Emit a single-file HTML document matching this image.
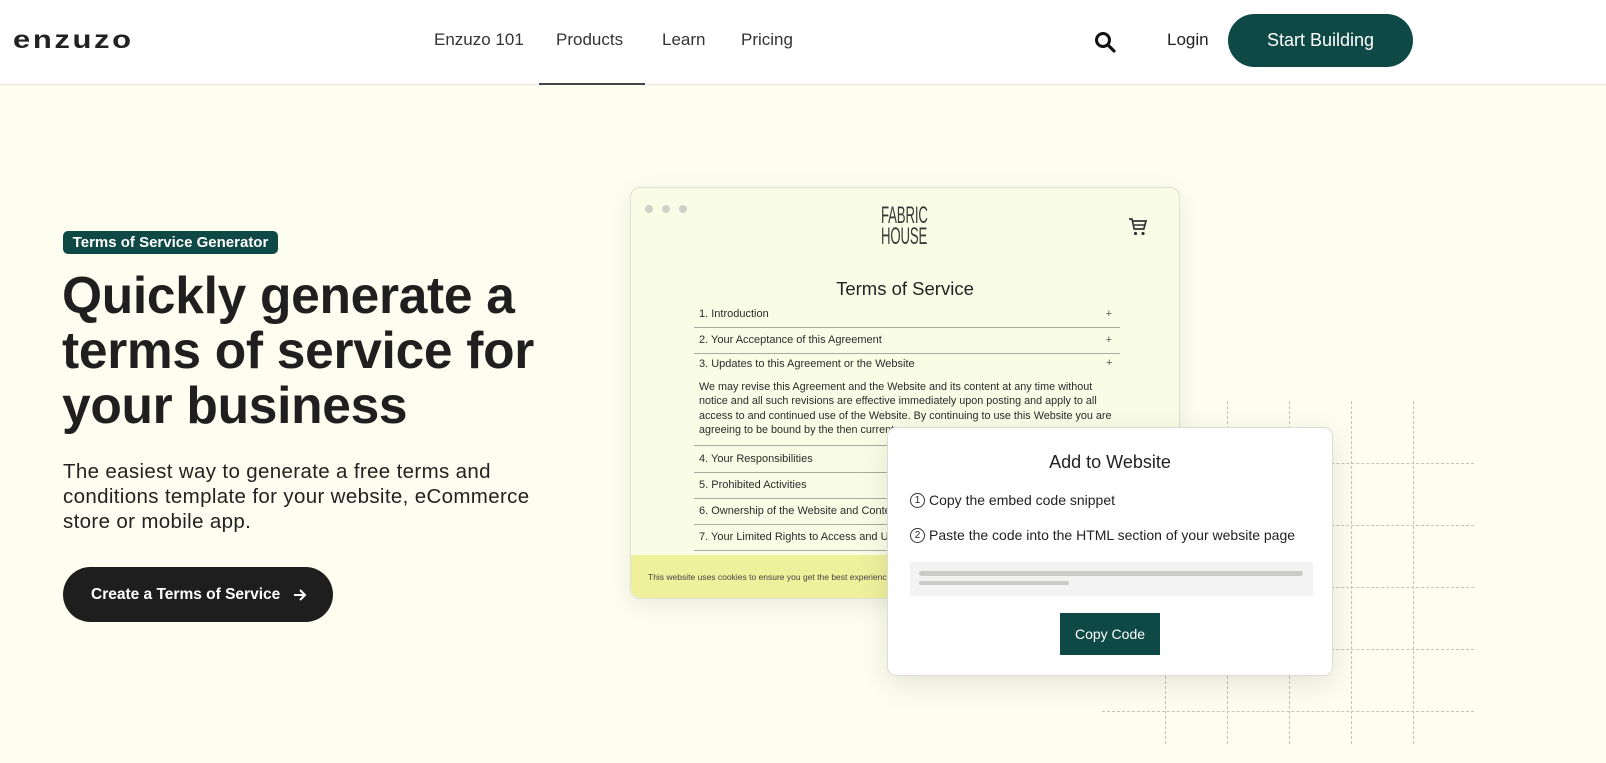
<!DOCTYPE html>
<html><head><meta charset="utf-8"><style>
*{margin:0;padding:0;box-sizing:border-box}
body{width:1606px;height:763px;overflow:hidden;background:#fdfeef;font-family:"Liberation Sans",sans-serif;color:#1f1f1f;position:relative}
.abs{position:absolute}
header{position:absolute;left:0;top:0;width:1606px;height:85px;background:#fff;border-bottom:1px solid #e6e6df}
.nav{position:absolute;top:30px;font-size:17px;color:#333}
.row{position:absolute;left:694px;width:426px;font-size:11px;color:#2a2a2a;border-bottom:1px solid #a9aaa0;height:26px;line-height:24px;padding-left:5px}
.row span{position:absolute;right:8px;top:0;color:#555}
.v{position:absolute;width:0;border-left:1px dashed #c4c4bb;top:401px;height:343px}
.h{position:absolute;height:0;border-top:1px dashed #c4c4bb;left:1102px;width:372px}
</style></head><body>
<header>
<div class="abs" style="left:13px;top:22px;font-size:31px;letter-spacing:2.6px;color:#222;font-weight:bold;transform:scaleY(.8)">enzuzo</div>
<div class="nav" style="left:434px">Enzuzo 101</div>
<div class="nav" style="left:556px">Products</div>
<div class="nav" style="left:662px">Learn</div>
<div class="nav" style="left:741px">Pricing</div>
<div class="abs" style="left:539px;top:83px;width:106px;height:2px;background:#444"></div>
<svg class="abs" style="left:1094px;top:31px" width="23" height="23" viewBox="0 0 23 23"><circle cx="9" cy="9" r="6.5" fill="none" stroke="#111" stroke-width="3"/><path d="M14 14l6 6" stroke="#111" stroke-width="3.2" stroke-linecap="round"/></svg>
<div class="nav" style="left:1167px;color:#222">Login</div>
<div class="abs" style="left:1228px;top:14px;width:185px;height:53px;border-radius:27px;background:#0f4946;color:#fff;font-size:18px;text-align:center;line-height:53px">Start Building</div>
</header>

<div class="abs" style="left:63px;top:231px;width:215px;height:23px;border-radius:5px;background:#0f4946;color:#fff;font-weight:bold;font-size:15px;line-height:23px;text-align:center">Terms of Service Generator</div>
<div class="abs" style="left:62px;top:268px;font-size:51.5px;font-weight:bold;line-height:55px;letter-spacing:-0.3px;color:#1f1f1f">Quickly generate a<br>terms of service for<br>your business</div>
<div class="abs" style="left:63px;top:459px;font-size:20.5px;line-height:25px;letter-spacing:0.35px;color:#222">The easiest way to generate a free terms and<br>conditions template for your website, eCommerce<br>store or mobile app.</div>
<div class="abs" style="left:63px;top:567px;width:270px;height:55px;border-radius:28px;background:#1e1e1e;color:#fff;font-weight:bold;font-size:15.5px;line-height:55px;padding-left:28px">Create a Terms of Service
<svg style="position:absolute;left:230px;top:21px" width="14" height="14" viewBox="0 0 14 14"><path d="M1 7h11M7 2l5 5-5 5" fill="none" stroke="#fff" stroke-width="2"/></svg></div>

<div class="v" style="left:1165px"></div><div class="v" style="left:1227px"></div><div class="v" style="left:1289px"></div><div class="v" style="left:1351px"></div><div class="v" style="left:1413px"></div>
<div class="h" style="top:463px"></div><div class="h" style="top:525px"></div><div class="h" style="top:587px"></div><div class="h" style="top:649px"></div><div class="h" style="top:711px"></div>

<div class="abs" style="left:630px;top:187px;width:550px;height:412px;border-radius:10px;background:#fafde6;border:1px solid #dfe0d4;box-shadow:0 6px 24px rgba(0,0,0,.08);overflow:hidden">
<div class="abs" style="left:14px;top:17px;width:8px;height:8px;border-radius:50%;background:#cfd0c8"></div>
<div class="abs" style="left:31px;top:17px;width:8px;height:8px;border-radius:50%;background:#cfd0c8"></div>
<div class="abs" style="left:48px;top:17px;width:8px;height:8px;border-radius:50%;background:#cfd0c8"></div>
<div class="abs" style="left:232px;top:17px;width:80px;text-align:center;font-size:24px;line-height:21px;color:#3a3a3a;transform:scaleX(.55);letter-spacing:-0.3px">FABRIC<br>HOUSE</div>
<svg class="abs" style="left:497px;top:29px" width="20" height="20" viewBox="0 0 20 20"><path d="M1 2h3l2.2 10h9.6l2.2-8H5" fill="none" stroke="#333" stroke-width="1.7"/><path d="M6 8h11" stroke="#333" stroke-width="1.5"/><circle cx="7.5" cy="16.5" r="1.6" fill="#333"/><circle cx="15" cy="16.5" r="1.6" fill="#333"/></svg>
<div class="abs" style="left:0;width:548px;top:90px;text-align:center;font-size:18.5px;color:#222">Terms of Service</div>
</div>
<div class="row" style="top:302px">1. Introduction<span>+</span></div>
<div class="row" style="top:328px">2. Your Acceptance of this Agreement<span>+</span></div>
<div class="abs" style="left:699px;top:358px;font-size:11px;color:#2a2a2a">3. Updates to this Agreement or the Website</div>
<div class="abs" style="left:1106px;top:357px;font-size:11px;color:#555">+</div>
<div class="abs" style="left:694px;top:380px;width:426px;padding-left:5px;font-size:10.8px;line-height:14.3px;color:#2a2a2a;height:66px;border-bottom:1px solid #a9aaa0;overflow:hidden">We may revise this Agreement and the Website and its content at any time without notice and all such revisions are effective immediately upon posting and apply to all access to and continued use of the Website. By continuing to use this Website you are agreeing to be bound by the then current</div>
<div class="row" style="top:447px">4. Your Responsibilities</div>
<div class="row" style="top:473px">5. Prohibited Activities</div>
<div class="row" style="top:499px">6. Ownership of the Website and Content</div>
<div class="row" style="top:525px">7. Your Limited Rights to Access and Use</div>
<div class="abs" style="left:631px;top:555px;width:548px;height:43px;background:#eff09c;border-radius:0 0 10px 10px;font-size:8.5px;color:#444;padding:17px 0 0 17px">This website uses cookies to ensure you get the best experience</div>

<div class="abs" style="left:887px;top:427px;width:446px;height:249px;background:#fff;border:1px solid #dcdcd6;border-radius:9px;box-shadow:0 8px 30px rgba(0,0,0,.1)">
<div class="abs" style="left:0;width:444px;top:24px;text-align:center;font-size:18px;color:#222">Add to Website</div>
<div class="abs" style="left:22px;top:65px;width:15px;height:15px;border:1px solid #333;border-radius:50%;font-size:10px;text-align:center;line-height:13px">1</div>
<div class="abs" style="left:41px;top:64px;font-size:14px;color:#222">Copy the embed code snippet</div>
<div class="abs" style="left:22px;top:100px;width:15px;height:15px;border:1px solid #333;border-radius:50%;font-size:10px;text-align:center;line-height:13px">2</div>
<div class="abs" style="left:41px;top:99px;font-size:14px;color:#222">Paste the code into the HTML section of your website page</div>
<div class="abs" style="left:22px;top:134px;width:403px;height:34px;background:#f2f3f2"></div>
<div class="abs" style="left:31px;top:143px;width:384px;height:5px;border-radius:3px;background:#cacac6"></div>
<div class="abs" style="left:31px;top:153px;width:150px;height:4px;border-radius:2px;background:#cacac6"></div>
<div class="abs" style="left:172px;top:185px;width:100px;height:42px;background:#0f4946;color:#fff;font-size:14px;text-align:center;line-height:42px">Copy Code</div>
</div>
</body></html>
